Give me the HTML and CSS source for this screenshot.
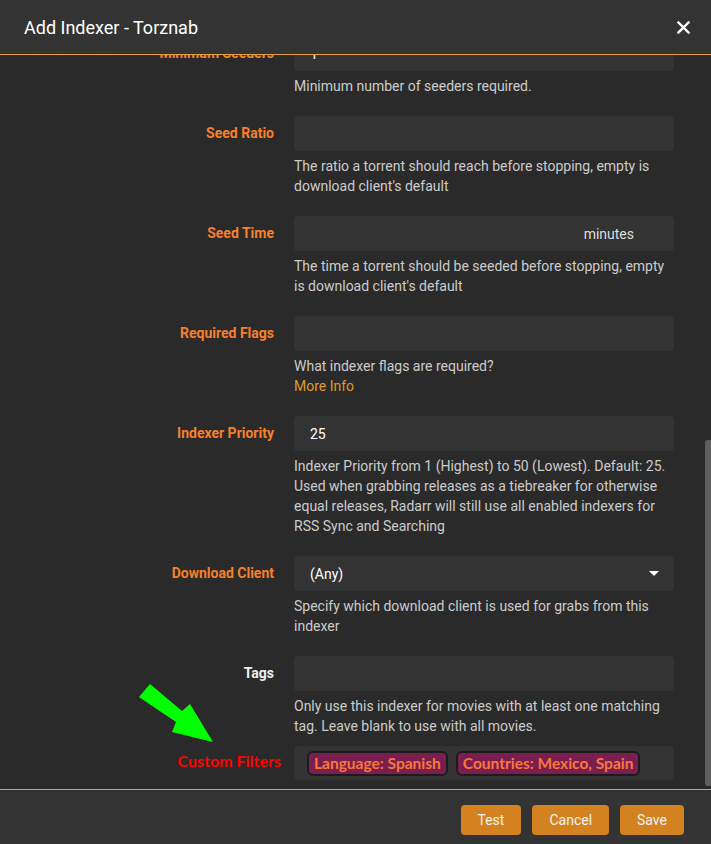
FILE: index.html
```html
<!DOCTYPE html>
<html lang="en">
<head>
    <meta charset="UTF-8">
    <meta name="viewport" content="width=device-width, initial-scale=1.0">
    <title>Add Indexer - Torznab</title>
    <link rel="stylesheet" href="styles.css">
</head>
<body>
    <div class="modal">
        <header class="modal-header">
            <h2 class="modal-title">Add Indexer - Torznab</h2>
            <button class="close-btn" title="Close">
                <svg width="13" height="13" viewBox="0 0 13 13"><path d="M1.5 1.5 L11.5 11.5 M11.5 1.5 L1.5 11.5" stroke="#fff" stroke-width="2.4" stroke-linecap="square"/></svg>
            </button>
        </header>

        <div class="modal-body" id="modalBody">
            <div class="form-group">
                <label class="form-label plain">Name</label>
                <div class="form-field"><input class="input" type="text" value=""></div>
            </div>
            <div class="form-group">
                <label class="form-label plain">Enable RSS</label>
                <div class="form-field">
                    <div class="check-row"><span class="checkbox on"></span></div>
                    <div class="help-text">Will be used when Radarr periodically looks for releases via RSS Sync</div>
                </div>
            </div>
            <div class="form-group">
                <label class="form-label plain">Enable Automatic Search</label>
                <div class="form-field">
                    <div class="check-row"><span class="checkbox on"></span></div>
                    <div class="help-text">Will be used when automatic searches are performed via the UI or by Radarr</div>
                </div>
            </div>
            <div class="form-group">
                <label class="form-label plain">Enable Interactive Search</label>
                <div class="form-field">
                    <div class="check-row"><span class="checkbox on"></span></div>
                    <div class="help-text">Will be used when interactive search is used</div>
                </div>
            </div>
            <div class="form-group">
                <label class="form-label plain">URL</label>
                <div class="form-field"><input class="input" type="text" value=""></div>
            </div>
            <div class="form-group">
                <label class="form-label">API Path</label>
                <div class="form-field">
                    <input class="input" type="text" value="/api">
                    <div class="help-text">Path to the api, usually /api</div>
                </div>
            </div>
            <div class="form-group">
                <label class="form-label">Multi Languages</label>
                <div class="form-field">
                    <div class="input select-box"><span></span><span class="caret"></span></div>
                    <div class="help-text">What languages are normally in a multi release on this indexer?</div>
                </div>
            </div>
            <div class="form-group">
                <label class="form-label plain">API Key</label>
                <div class="form-field"><input class="input" type="text" value=""></div>
            </div>
            <div class="form-group">
                <label class="form-label plain">Categories</label>
                <div class="form-field">
                    <div class="input select-box"><span>2000, 2010</span><span class="caret"></span></div>
                    <div class="help-text">Drop down list, leave blank to disable movies</div>
                </div>
            </div>
            <div class="form-group">
                <label class="form-label">Additional Parameters</label>
                <div class="form-field">
                    <input class="input" type="text" value="">
                    <div class="help-text">Please note if you change the category you will have to add required/restricted rules about the subgroups to avoid foreign language releases.</div>
                </div>
            </div>
            <div class="form-group">
                <label class="form-label">Remove year from search string</label>
                <div class="form-field">
                    <div class="check-row"><span class="checkbox"></span></div>
                    <div class="help-text">Should Radarr remove the year after the title when searching this indexer?</div>
                </div>
            </div>
            <div class="form-group">
                <label class="form-label">Minimum Seeders</label>
                <div class="form-field">
                    <input class="input" type="text" value="1">
                    <div class="help-text">Minimum number of seeders required.</div>
                </div>
            </div>
            <div class="form-group">
                <label class="form-label">Seed Ratio</label>
                <div class="form-field">
                    <input class="input" type="text" value="">
                    <div class="help-text">The ratio a torrent should reach before stopping, empty is download client's default</div>
                </div>
            </div>
            <div class="form-group">
                <label class="form-label">Seed Time</label>
                <div class="form-field">
                    <div class="input unit-box"><span></span><span class="unit">minutes</span></div>
                    <div class="help-text">The time a torrent should be seeded before stopping, empty is download client's default</div>
                </div>
            </div>
            <div class="form-group">
                <label class="form-label">Required Flags</label>
                <div class="form-field">
                    <div class="input select-box"></div>
                    <div class="help-text">What indexer flags are required?<br><a class="help-link" href="#">More Info</a></div>
                </div>
            </div>
            <div class="form-group">
                <label class="form-label">Indexer Priority</label>
                <div class="form-field">
                    <input class="input" type="text" value="25">
                    <div class="help-text">Indexer Priority from 1 (Highest) to 50 (Lowest). Default: 25. Used when grabbing releases as a tiebreaker for otherwise equal releases, Radarr will still use all enabled indexers for RSS Sync and Searching</div>
                </div>
            </div>
            <div class="form-group">
                <label class="form-label">Download Client</label>
                <div class="form-field">
                    <div class="input select-box"><span>(Any)</span><span class="caret"></span></div>
                    <div class="help-text">Specify which download client is used for grabs from this indexer</div>
                </div>
            </div>
            <div class="form-group tight">
                <label class="form-label plain">Tags</label>
                <div class="form-field">
                    <div class="input"></div>
                    <div class="help-text">Only use this indexer for movies with at least one matching tag. Leave blank to use with all movies.</div>
                </div>
            </div>
            <div class="form-group last">
                <label class="form-label custom">Custom Filters</label>
                <div class="form-field">
                    <div class="input chip-box">
                        <span class="chip">Language: Spanish</span>
                        <span class="chip">Countries: Mexico, Spain</span>
                    </div>
                </div>
            </div>
        </div>

        <!-- scroll position marker for the form body -->
        <div class="scroll-thumb"></div>

        <footer class="modal-footer">
            <button class="btn">Test</button>
            <button class="btn">Cancel</button>
            <button class="btn">Save</button>
        </footer>

        <!-- green pointer drawn over the custom filters row -->
        <svg class="pointer" width="711" height="844" viewBox="0 0 711 844">
            <polygon points="139,697 150,684 182,711 190,704 213,742 172,732 176,722" fill="#00ff00"/>
        </svg>
    </div>

    <script>
        window.onload = function () {
            const body = document.getElementById('modalBody');
            body.scrollTop = body.scrollHeight;
        };
    </script>
</body>
</html>
```

FILE: styles.css
```css
body {
    font-family: 'Roboto', sans-serif;
    background-color: #2a2a2a;
    margin: 0;
    padding: 0;
}
.modal {
    position: relative;
    display: flex;
    flex-direction: column;
    width: 711px;
    height: 844px;
    overflow: hidden;
}
.modal-header {
    display: flex;
    align-items: center;
    justify-content: space-between;
    height: 54px;
    padding: 0 18px 0 24px;
    background-color: #333;
    border-bottom: 1px solid #e39f2f;
    flex-shrink: 0;
}
.modal-title {
    margin: 0;
    font-size: 18px;
    font-weight: 400;
    color: #fff;
}
.close-btn {
    background: none;
    border: none;
    padding: 0;
    width: 20px;
    height: 20px;
    display: flex;
    align-items: center;
    justify-content: center;
    cursor: pointer;
}
.modal-body {
    flex: 1;
    overflow-y: auto;
    padding: 30px 6px 9px 24px;
    background-color: #2a2a2a;
    scrollbar-width: none;
}
.modal-body::-webkit-scrollbar {
    display: none;
}
.scroll-thumb {
    position: absolute;
    right: 0;
    top: 440px;
    width: 6px;
    height: 346px;
    background-color: #5f5f5f;
    border-radius: 3px 0 0 3px;
}
.form-group {
    display: grid;
    grid-template-columns: 250px 380px;
    column-gap: 20px;
    margin-bottom: 20px;
}
.form-group.tight {
    margin-bottom: 10px;
}
.form-group.last {
    margin-bottom: 0;
}
.form-label {
    text-align: right;
    line-height: 35px;
    font-size: 14px;
    font-weight: 700;
    color: #f7802c;
}
.form-label.plain {
    color: #eee;
}
.form-label.custom {
    font-family: 'Lato', sans-serif;
    font-size: 16px;
    color: #ff0000;
    margin-right: -7px;
    line-height: 30px;
}
.input {
    display: block;
    width: 100%;
    height: 35px;
    box-sizing: border-box;
    padding: 0 16px;
    border: none;
    border-radius: 4px;
    background-color: #333;
    color: #fff;
    font-family: 'Roboto', sans-serif;
    font-size: 14px;
    outline: none;
}
.select-box,
.unit-box {
    display: flex;
    align-items: center;
    justify-content: space-between;
}
.unit-box {
    padding-right: 40px;
}
.unit {
    color: #ddd;
}
.caret {
    width: 0;
    height: 0;
    border-left: 5px solid transparent;
    border-right: 5px solid transparent;
    border-top: 5px solid #fff;
    margin-right: -1px;
}
.help-text {
    margin-top: 5px;
    font-size: 14px;
    line-height: 20px;
    color: #ccc;
}
.help-link {
    color: #dc9b2c;
    text-decoration: none;
}
.check-row {
    height: 35px;
    display: flex;
    align-items: center;
}
.checkbox {
    width: 18px;
    height: 18px;
    border-radius: 2px;
    border: 1px solid #555;
    background-color: #333;
}
.checkbox.on {
    background-color: #d4821f;
    border-color: #d4821f;
}
.chip-box {
    display: flex;
    align-items: center;
    gap: 8px;
    height: 34px;
    padding-left: 13px;
}
.chip {
    height: 25px;
    box-sizing: border-box;
    padding: 0 5px;
    display: flex;
    align-items: center;
    border: 2px solid #1c1c1c;
    border-radius: 6px;
    background-color: #7b1e4f;
    color: #f6783a;
    font-family: 'Lato', sans-serif;
    font-size: 15.5px;
    font-weight: 700;
}
.modal-footer {
    display: flex;
    justify-content: flex-end;
    gap: 11px;
    height: 55px;
    padding: 15px 27px 0 0;
    box-sizing: border-box;
    background-color: #333;
    border-top: 1px solid #e39f2f;
    flex-shrink: 0;
}
.btn {
    height: 30px;
    padding: 0 17px;
    border: none;
    border-radius: 4px;
    background-color: #d4821f;
    color: #f2f2f2;
    font-family: 'Roboto', sans-serif;
    font-size: 14px;
    cursor: pointer;
}
.pointer {
    position: absolute;
    left: 0;
    top: 0;
    pointer-events: none;
}
```
